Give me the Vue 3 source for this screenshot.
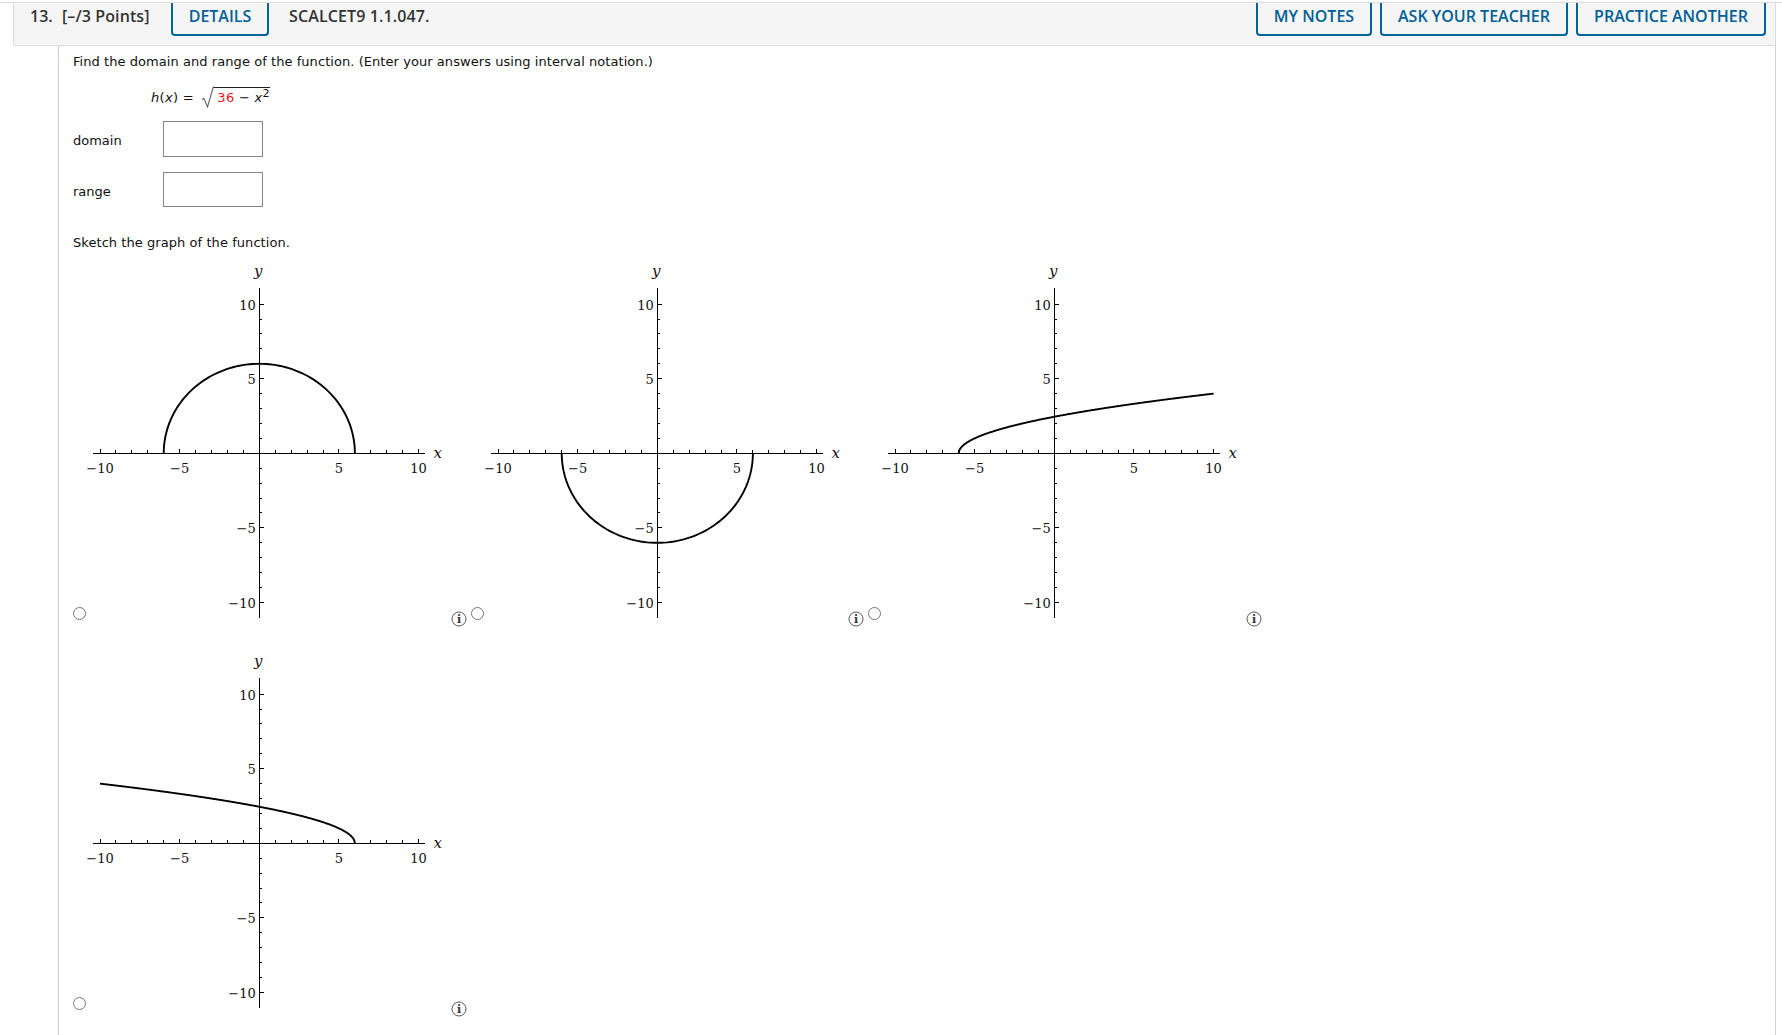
<script setup>
const scaleX = 15.93
const scaleY = 14.92
const originX = 173.3
const originY = 190.3

const px = (x) => originX + x * scaleX
const py = (y) => originY - y * scaleY

function curve(fn, from, to) {
  const steps = 400
  const pts = []
  for (let i = 0; i <= steps; i++) {
    const x = from + ((to - from) * i) / steps
    pts.push(px(x).toFixed(2) + ' ' + py(fn(x)).toFixed(2))
  }
  return 'M' + pts.join('L')
}

function arc(sign) {
  const pts = []
  for (let a = 0; a <= 180; a += 2) {
    const r = (a * Math.PI) / 180
    pts.push(px(6 * Math.cos(r)).toFixed(2) + ' ' + py(sign * 6 * Math.sin(r)).toFixed(2))
  }
  return 'M' + pts.join('L')
}

const options = [
  { id: 1, path: arc(1) },
  { id: 2, path: arc(-1) },
  { id: 3, path: curve((x) => Math.sqrt(Math.max(0, x + 6)), -6, 10) },
  { id: 4, path: curve((x) => Math.sqrt(Math.max(0, 6 - x)), -10, 6) }
]

const units = []
for (let i = -10; i <= 10; i++) if (i !== 0) units.push(i)

const xLabels = [-10, -5, 5, 10]
const yLabels = [10, 5, -5, -10]
const fmt = (n) => (n < 0 ? '\u2212' + Math.abs(n) : String(n))
</script>

<template>
  <div class="page">
    <header class="head">
      <span class="num">13.</span>
      <span class="pts">[–/3 Points]</span>
      <button class="tab details">DETAILS</button>
      <span class="ref">SCALCET9 1.1.047.</span>
      <div class="tabs">
        <button class="tab notes">MY NOTES</button>
        <button class="tab ask">ASK YOUR TEACHER</button>
        <button class="tab another">PRACTICE ANOTHER</button>
      </div>
    </header>

    <main class="body">
      <p class="prompt">Find the domain and range of the function. (Enter your answers using interval notation.)</p>

      <div class="formula">
        <i>h</i>(<i>x</i>) =
        <span class="root">
          <svg class="radical" width="13" height="22" viewBox="0 0 13 22">
            <path d="M1 13.5 L3 12.5 L6.5 21 L12.5 0.5" fill="none" stroke="#666" stroke-width="1.1" />
          </svg>
          <span class="radicand"><span class="red">36</span> − <i>x</i><sup>2</sup></span>
        </span>
      </div>

      <div class="field">
        <label class="label">domain</label>
        <input class="answer" type="text" />
      </div>
      <div class="field second">
        <label class="label">range</label>
        <input class="answer" type="text" />
      </div>

      <p class="sketch">Sketch the graph of the function.</p>

      <div class="graphs">
        <div v-for="o in options" :key="o.id" class="option">
          <input class="radio" type="radio" name="graph" />
          <svg class="plot" width="360" height="360" viewBox="0 0 360 360">
            <g stroke="#000" stroke-width="1" fill="none" shape-rendering="crispEdges">
              <path :d="`M${originX - 166} ${originY}H${originX + 165.7}`" />
              <path :d="`M${originX} ${originY - 165.6}V${originY + 165}`" />
              <path
                v-for="u in units"
                :key="'x' + u"
                :d="`M${px(u)} ${originY}v${u % 5 === 0 ? -4.5 : -3}`"
              />
              <path
                v-for="u in units"
                :key="'y' + u"
                :d="`M${originX} ${py(u)}h${u % 5 === 0 ? 4.5 : 3}`"
              />
            </g>
            <path :d="o.path" fill="none" stroke="#000" stroke-width="1.9" />
            <g class="ticks">
              <text
                v-for="n in xLabels"
                :key="'lx' + n"
                :x="px(n)"
                :y="originY + 19.5"
                text-anchor="middle"
              >{{ fmt(n) }}</text>
              <text
                v-for="n in yLabels"
                :key="'ly' + n"
                :x="originX - 3.6"
                :y="py(n) + 5.5"
                text-anchor="end"
              >{{ fmt(n) }}</text>
            </g>
            <text class="var" :x="originX - 1" y="13" text-anchor="middle">y</text>
            <text class="var" :x="originX + 178.5" :y="originY + 5" text-anchor="middle">x</text>
          </svg>
          <svg class="info" width="16" height="16" viewBox="0 0 16 16">
            <circle cx="8" cy="8" r="7" fill="#fff" stroke="#444" stroke-width="0.9" />
            <text x="8" y="12" text-anchor="middle">i</text>
          </svg>
        </div>
      </div>
    </main>
  </div>
</template>

<style scoped>
.page {
  height: 1032px;
  border-top: 1px solid #dcdcdc;
  margin-top: 2px;
  display: flex;
  flex-direction: column;
  overflow: hidden;
}
.head {
  box-sizing: border-box;
  flex: none;
  height: 43px;
  margin: 0 6px 0 13px;
  padding-left: 16px;
  background: #f5f5f5;
  border: 1px solid #dcdcdc;
  border-top: 0;
  border-bottom-left-radius: 2px;
  display: flex;
  align-items: flex-start;
  font-family: "Open Sans", "Noto Sans", sans-serif;
  font-size: 16px;
  font-weight: 600;
  color: #333;
}
.num,
.pts,
.ref {
  line-height: 26px;
}
.num {
  width: 32px;
}
.pts {
  width: 109px;
  letter-spacing: 0.1px;
}
.ref {
  margin-left: 20px;
  letter-spacing: 0.12px;
}
.tab {
  box-sizing: border-box;
  height: 33px;
  margin: 0;
  padding: 0 0 3px;
  background: transparent;
  border: 2px solid #00659c;
  border-top: 0;
  border-radius: 0 0 4px 4px;
  color: #005f96;
  font: 600 16px/26px "Open Sans", "Noto Sans", sans-serif;
  display: flex;
  justify-content: center;
}
.details {
  width: 98px;
}
.tabs {
  margin-left: auto;
  margin-right: 9px;
  display: flex;
  gap: 8px;
}
.notes {
  width: 116px;
}
.ask {
  width: 188px;
}
.another {
  width: 190px;
}
.body {
  flex: 1;
  min-height: 0;
  margin: 0 6px 0 58px;
  padding-left: 14px;
  border-left: 1px solid #cfcfcf;
  border-right: 1px solid #cfcfcf;
  font-family: "DejaVu Sans", Verdana, sans-serif;
  font-size: 13px;
  color: #111;
}
.prompt {
  margin: 0;
  padding-top: 8px;
  line-height: 16px;
  letter-spacing: 0.06px;
}
.formula {
  display: flex;
  align-items: baseline;
  margin: 17.5px 0 0 78px;
  height: 33.5px;
  line-height: 20px;
  letter-spacing: 0.3px;
  white-space: pre-wrap;
}
.root {
  margin-left: 3px;
  position: relative;
  padding-left: 12px;
}
.radical {
  position: absolute;
  left: 0;
  top: -2px;
}
.radicand {
  border-top: 1px solid #222;
  padding: 2px 0 0 4px;
}
.red {
  color: #f0141e;
}
sup {
  font-size: 11px;
  line-height: 0;
}
.field {
  display: flex;
  align-items: center;
  height: 35.5px;
}
.second {
  margin-top: 15px;
}
.label {
  width: 90px;
  position: relative;
  top: 2px;
}
.answer {
  box-sizing: border-box;
  width: 100px;
  height: 35.5px;
  padding: 0;
  background: #fff;
  border: 1px solid #858585;
  border-radius: 0;
}
.sketch {
  margin: 28px 0 0;
  line-height: 16px;
  letter-spacing: 0.06px;
}
.graphs {
  margin-top: 12px;
  width: 1194px;
  display: flex;
  flex-wrap: wrap;
}
.option {
  width: 397.6px;
  height: 390px;
  display: flex;
  align-items: flex-start;
}
.radio {
  width: 13px;
  height: 13px;
  margin: 344px 0 0 0;
  flex: none;
}
.plot {
  flex: none;
}
.ticks text {
  font-family: "DejaVu Serif", serif;
  font-size: 13px;
  fill: #111;
}
.var {
  font-family: "DejaVu Serif", serif;
  font-style: italic;
  font-size: 15px;
  fill: #111;
}
.info {
  margin: 347.5px 0 0 4.5px;
  flex: none;
}
.info text {
  font-family: "DejaVu Serif", serif;
  font-weight: 700;
  font-size: 11px;
  fill: #333;
}
</style>

<style>
body {
  background: #fff;
}
</style>
